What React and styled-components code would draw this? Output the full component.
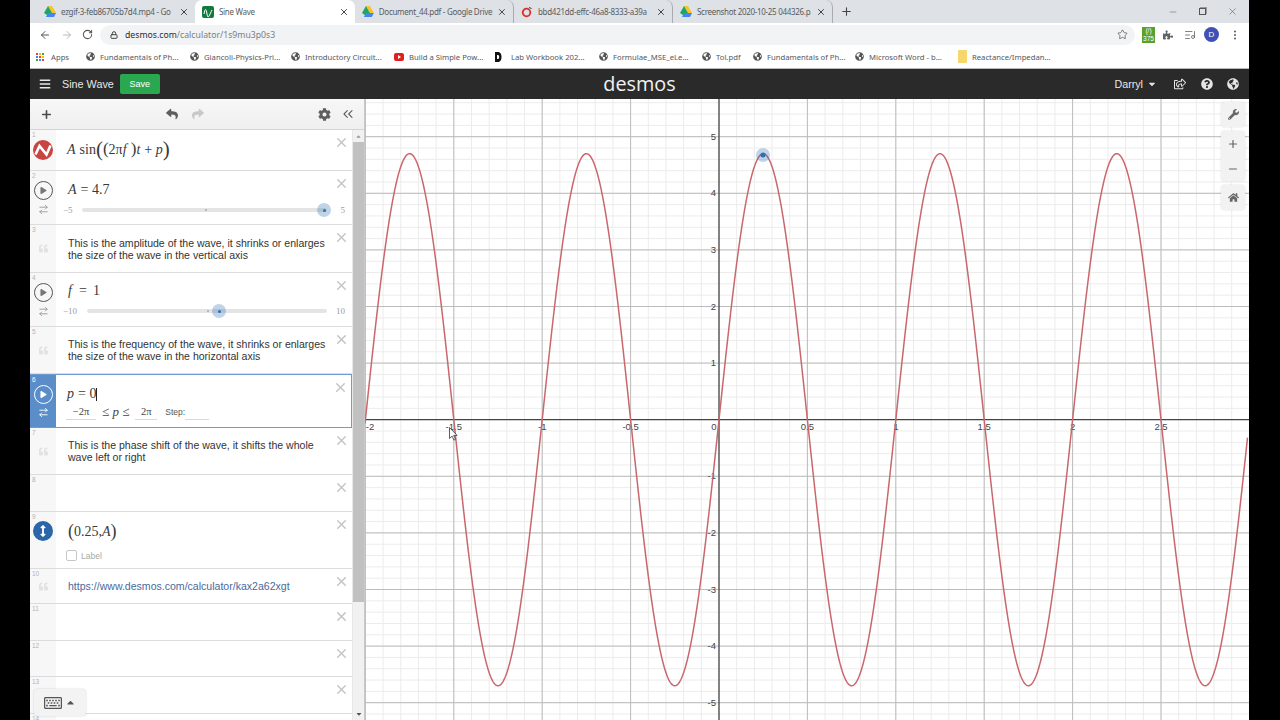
import React from 'react';
import styled, { createGlobalStyle } from 'styled-components';
import { ArrowLeft, ArrowRight, RotateCw, Lock, Star, Plus, Minus, X, ArrowRightLeft, ChevronsLeft, MoreVertical, ListMusic } from 'lucide-react';
import {
  FaBars, FaCog, FaWrench, FaHome, FaRegShareSquare, FaQuestionCircle, FaGlobeAmericas, FaReply, FaShare,
  FaQuoteLeft, FaPlay, FaArrowsAltV, FaPuzzlePiece, FaRegKeyboard, FaCaretUp, FaCaretDown,
} from 'react-icons/fa';

const GlobalStyle = createGlobalStyle`
  html, body { margin: 0; padding: 0; background: #000; }
  * { box-sizing: border-box; }
`;

const sansUi = '"Noto Sans", "Open Sans", sans-serif';
const arial = '"Liberation Sans", Arial, sans-serif';
const serif = '"Liberation Serif", "Times New Roman", serif';

const UNIT_X = 176.8;
const UNIT_Y = 56.6;
const ORIGIN_X = 719;
const ORIGIN_Y = 419.7;
const GRAPH_LEFT = 365;
const GRAPH_RIGHT = 1249;
const GRAPH_TOP = 99;
const GRAPH_BOTTOM = 720;

const Frame = styled.div`
  width: 1280px;
  height: 720px;
  background: #000;
  padding: 0 31px 0 30px;
  overflow: hidden;
`;

const Window = styled.div`
  width: 1219px;
  height: 720px;
  display: flex;
  flex-direction: column;
  background: #fff;
`;

const TabStrip = styled.div`
  height: 23px;
  background: #dee1e6;
  display: flex;
  align-items: stretch;
  padding-left: 7px;
  font-family: ${sansUi};
  font-size: 8px;
  letter-spacing: -0.3px;
  color: #5a5c60;
`;

const Tab = styled.div`
  width: ${(p) => p.$w}px;
  display: flex;
  align-items: center;
  gap: 5px;
  padding: 0 6px 0 7px;
  background: ${(p) => (p.$active ? '#fff' : 'transparent')};
  border-radius: 7px 7px 0 0;
  border-right: ${(p) => (p.$sep ? '1px solid #a9abb0' : 'none')};
  background-clip: padding-box;
`;

const TabTitle = styled.span`
  flex: 1;
  white-space: nowrap;
`;

const NewTab = styled.div`
  margin-left: 7px;
  display: flex;
  align-items: center;
  color: #444;
`;

const WindowControls = styled.div`
  margin-left: auto;
  display: flex;
  align-items: center;
  gap: 21px;
  padding-right: 11px;
  color: #555;
`;

const RestoreGlyph = styled.span`
  width: 7px;
  height: 7px;
  border: 1px solid #555;
  box-shadow: 1px -1px 0 0 #999;
`;

const AddressBar = styled.div`
  height: 23px;
  background: #fff;
  display: flex;
  align-items: center;
  padding-left: 9px;
  color: #5f6368;
`;

const NavButton = styled.div`
  width: 21.5px;
  display: flex;
  align-items: center;
  color: ${(p) => (p.$off ? '#b5b8bc' : '#555')};
`;

const Omnibox = styled.div`
  width: 1035px;
  height: 20px;
  margin-left: -3.5px;
  padding: 0 7px 0 10px;
  border-radius: 10px;
  background: #f1f3f4;
  display: flex;
  align-items: center;
  gap: 7px;
  font-family: ${sansUi};
  font-size: 8.7px;
  color: #7b7e83;
`;

const UrlHost = styled.span`
  color: #2c2d30;
`;

const OmniStar = styled.div`
  margin-left: auto;
  display: flex;
  color: #555;
`;

const ExtBadge = styled.div`
  width: 13px;
  height: 16px;
  margin-left: 7px;
  background: #5aa02c;
  color: #fff;
  font-family: ${arial};
  font-size: 6.5px;
  line-height: 8px;
  text-align: center;
`;

const ToolIcon = styled.div`
  margin-left: ${(p) => p.$ml}px;
  display: flex;
  color: #5f6368;
`;

const Avatar = styled.div`
  width: 15px;
  height: 15px;
  margin-left: 8px;
  border-radius: 50%;
  background: #3f51b5;
  color: #fff;
  font-family: ${arial};
  font-size: 8px;
  display: flex;
  align-items: center;
  justify-content: center;
`;

const Bookmarks = styled.div`
  height: 23px;
  background: #fff;
  border-bottom: 1px solid #b9b9b9;
  display: flex;
  align-items: center;
  padding: 0 0 1px 5px;
  font-family: ${sansUi};
  font-size: 7.7px;
  color: #55575b;
`;

const Bookmark = styled.div`
  width: ${(p) => p.$w}px;
  display: flex;
  align-items: center;
  gap: ${(p) => p.$gap || 5}px;
  white-space: nowrap;
`;

const AppsGrid = styled.div`
  display: grid;
  grid-template-columns: repeat(3, 2px);
  gap: 1px;
  margin-left: 1px;
`;

const AppsDot = styled.span`
  width: 2px;
  height: 2px;
  background: ${(p) => p.$c};
`;

const TopBar = styled.div`
  height: 30px;
  background: #2a2a2a;
  color: #e8e8e8;
  display: grid;
  grid-template-columns: 1fr auto 1fr;
  align-items: center;
  font-family: ${arial};
`;

const TopLeft = styled.div`
  display: flex;
  align-items: center;
  padding-left: 9px;
  font-size: 10.8px;
`;

const TopTitle = styled.span`
  margin-left: 11px;
`;

const SaveButton = styled.div`
  width: 40px;
  height: 20px;
  margin-left: 6px;
  border-radius: 2px;
  background: #2aa84f;
  color: #fff;
  font-size: 9px;
  display: flex;
  align-items: center;
  justify-content: center;
`;

const Logo = styled.div`
  font-family: "Open Sans", sans-serif;
  font-size: 19.8px;
  line-height: 24px;
  color: #f2f2f2;
`;

const TopRight = styled.div`
  display: flex;
  align-items: center;
  justify-content: flex-end;
  padding-right: 10px;
  font-size: 10.7px;
`;

const TopIcon = styled.div`
  display: flex;
  margin-left: ${(p) => p.$ml}px;
  color: #e4e4e4;
`;

const Main = styled.div`
  flex: 1;
  display: flex;
  min-height: 0;
`;

const Side = styled.div`
  width: 335px;
  flex: none;
  display: flex;
  flex-direction: column;
  position: relative;
  border-right: 1px solid #c8c8c8;
  overflow: hidden;
`;

const ListHeader = styled.div`
  height: 31px;
  flex: none;
  background: linear-gradient(#f7f7f7, #efefef);
  border-bottom: 1px solid #d4d4d4;
  display: flex;
  align-items: center;
  color: #555;
  padding-left: 10px;
`;

const HeadIcon = styled.div`
  display: flex;
  margin-left: ${(p) => p.$ml || 0}px;
  color: ${(p) => p.$c || '#5e5e5e'};
`;

const ListBody = styled.div`
  flex: 1;
  display: flex;
  min-height: 0;
`;

const Rows = styled.div`
  width: 322px;
  flex: none;
`;

const RowBox = styled.div`
  height: ${(p) => p.$h}px;
  display: flex;
  border-bottom: 1px solid #dcdcdc;
  ${(p) => p.$active && 'border: 1px solid #6f9bcf; border-left: none;'}
`;

const Gutter = styled.div`
  width: 26px;
  flex: none;
  position: relative;
  background: ${(p) => (p.$active ? '#5b8ec9' : '#f7f7f7')};
  display: flex;
  flex-direction: column;
  align-items: center;
  padding-top: ${(p) => p.$top}px;
  gap: ${(p) => p.$gap || 0}px;
  color: ${(p) => (p.$active ? '#fff' : '#9a9a9a')};
`;

const RowNum = styled.span`
  position: absolute;
  top: 1px;
  left: 2px;
  font-family: ${arial};
  font-size: 6.5px;
  color: ${(p) => (p.$active ? '#fff' : '#b4b4b4')};
`;

const PlayCircle = styled.div`
  width: 19px;
  height: 19px;
  border-radius: 50%;
  border: 1.5px solid ${(p) => (p.$active ? '#fff' : '#555')};
  color: ${(p) => (p.$active ? '#fff' : '#777')};
  display: flex;
  align-items: center;
  justify-content: center;
  padding-left: 1px;
`;

const PointCircle = styled.div`
  width: 20px;
  height: 20px;
  border-radius: 50%;
  background: #2a66a8;
  color: #fff;
  display: flex;
  align-items: center;
  justify-content: center;
`;

const Content = styled.div`
  flex: 1;
  min-width: 0;
  display: flex;
  flex-direction: column;
  padding: ${(p) => p.$top || 0}px 0 0 ${(p) => p.$left ?? 12}px;
  color: #333;
`;

const CloseCol = styled.div`
  width: 22px;
  flex: none;
  padding: 5px 0 0 4px;
  margin-left: -4px;
  color: #c2c2c2;
`;

const MathLine = styled.div`
  font-family: ${serif};
  font-size: ${(p) => p.$size || 14}px;
  line-height: 18px;
  color: #3a3a3a;
  white-space: nowrap;
  display: flex;
  align-items: center;
`;

const Var = styled.i`
  margin-right: ${(p) => p.$mr || 0}px;
`;

const BigParen = styled.span`
  font-size: ${(p) => p.$size || 21}px;
  line-height: 18px;
  font-weight: 400;
  transform: translateY(-1px);
`;

const Caret = styled.span`
  width: 1px;
  height: 13px;
  background: #222;
`;

const SliderRow = styled.div`
  display: flex;
  align-items: center;
  margin: ${(p) => p.$mt}px 0 0 -5px;
  width: 282px;
  height: 14px;
  font-family: ${serif};
  font-size: 9px;
  color: #9c9c9c;
`;

const SliderEnd = styled.span`
  width: ${(p) => p.$w}px;
  flex: none;
  text-align: ${(p) => p.$align || 'left'};
`;

const SliderTrack = styled.div`
  flex: 1;
  height: 4px;
  border-radius: 2px;
  background: #e4e4e4;
  position: relative;
  &::before {
    content: '';
    position: absolute;
    left: 50%;
    top: 1px;
    width: 2px;
    height: 2px;
    background: #b8b8b8;
  }
`;

const Thumb = styled.div`
  position: absolute;
  top: -5px;
  width: 14px;
  height: 14px;
  margin-left: -7px;
  border-radius: 50%;
  background: rgba(45, 112, 179, 0.3);
  display: flex;
  align-items: center;
  justify-content: center;
  &::after {
    content: '';
    width: 3px;
    height: 3px;
    border-radius: 50%;
    background: #2d70b3;
  }
`;

const Note = styled.div`
  font-family: ${arial};
  font-size: 10.55px;
  line-height: 12px;
  color: ${(p) => p.$c || '#333'};
  white-space: pre;
`;

const LimitsRow = styled.div`
  display: flex;
  align-items: center;
  margin: 1px 0 0 -1px;
  font-family: ${serif};
  font-size: 10.5px;
  color: #444;
  height: 16px;
`;

const LimitField = styled.span`
  width: ${(p) => p.$w}px;
  height: 15px;
  line-height: 13px;
  text-align: center;
  border-bottom: 1px solid #d8d8d8;
  margin-left: ${(p) => p.$ml || 0}px;
`;

const LimitText = styled.span`
  font-family: ${serif};
  font-size: 13px;
  margin-left: 6px;
`;

const StepLabel = styled.span`
  font-family: ${arial};
  font-size: 8.5px;
  margin-left: 8px;
  color: #555;
`;

const LabelRow = styled.div`
  display: flex;
  align-items: center;
  gap: 4px;
  margin: 9px 0 0 -2px;
  font-family: ${arial};
  font-size: 8.5px;
  color: #a8a8a8;
`;

const CheckBox = styled.span`
  width: 11px;
  height: 11px;
  border: 1px solid #c6c6c6;
  border-radius: 2px;
`;

const KeyboardToggle = styled.div`
  position: absolute;
  left: 4px;
  bottom: 4px;
  width: 52px;
  height: 27px;
  background: #f3f3f3;
  border-radius: 4px;
  box-shadow: 0 0 2px rgba(0, 0, 0, 0.2);
  display: flex;
  align-items: center;
  justify-content: center;
  gap: 3px;
  color: #555;
`;

const ScrollBar = styled.div`
  flex: 1;
  background: #f1f1f1;
  display: flex;
  flex-direction: column;
  align-items: center;
  border-left: 1px solid #e8e8e8;
  color: #555;
`;

const ScrollArrow = styled.div`
  height: ${(p) => p.$h}px;
  display: flex;
  align-items: center;
  flex: none;
`;

const ScrollThumb = styled.div`
  width: 100%;
  height: 460px;
  flex: none;
  background: #c1c1c1;
`;

const ScrollRest = styled.div`
  flex: 1;
`;

const GraphPane = styled.div`
  flex: 1;
  position: relative;
  background: #fff;
  overflow: hidden;
`;

const GraphSvg = styled.svg`
  display: block;
  width: 884px;
  height: 621px;
`;

const GraphTools = styled.div`
  position: absolute;
  top: 3px;
  right: 4px;
  display: flex;
  flex-direction: column;
  gap: 4px;
`;

const ToolGroup = styled.div`
  width: 24px;
  background: #f2f2f2;
  border-radius: 4px;
  box-shadow: 0 0 2px rgba(0, 0, 0, 0.15);
  display: flex;
  flex-direction: column;
  color: #666;
`;

const ToolCell = styled.div`
  height: 25px;
  display: flex;
  align-items: center;
  justify-content: center;
`;

const AxisLabel = styled.text`
  font-family: ${arial};
  font-size: 9.5px;
  fill: #444;
`;

const DriveIcon = () => (
  <svg width="12" height="11" viewBox="0 0 24 22">
    <path d="M8 0h8l8 14h-8z" fill="#f7c325" />
    <path d="M8 0l8 14-4 8L0 14z" fill="#1fa463" />
    <path d="M8 14h16l-4 8H4z" fill="#4285f4" />
  </svg>
);

const DesmosFavicon = () => (
  <svg width="12" height="12" viewBox="0 0 12 12">
    <rect width="12" height="12" rx="2" fill="#127a3e" />
    <path d="M2 8c1-6 2-6 3 0s2 2 5-4" fill="none" stroke="#fff" strokeWidth="1" />
  </svg>
);

const RedRing = () => (
  <svg width="12" height="12" viewBox="0 0 12 12">
    <circle cx="5.5" cy="6.5" r="3.8" fill="none" stroke="#d9302b" strokeWidth="1.8" />
    <path d="M8 1.5l2.5 1" stroke="#333" strokeWidth="1" />
  </svg>
);

const YouTube = () => (
  <svg width="10" height="8" viewBox="0 0 10 8">
    <rect width="10" height="8" rx="2" fill="#e02020" />
    <path d="M4 2l3 2-3 2z" fill="#fff" />
  </svg>
);

const DocD = () => (
  <svg width="8" height="10" viewBox="0 0 8 10">
    <path d="M1 0h3c2.5 0 3.5 2.5 3.5 5S6.5 10 4 10H1z" fill="#111" />
    <path d="M3 3h1c1 0 1.2 1 1.2 2S5 7 4 7H3z" fill="#fff" />
  </svg>
);

const Folder = () => (
  <svg width="9" height="13" viewBox="0 0 9 13">
    <rect width="9" height="13" rx="1" fill="#f7d66b" />
  </svg>
);

const Globe = () => <FaGlobeAmericas size={9} color="#555" />;

const Close = ({ size = 15 }) => <X size={size} strokeWidth={2.2} />;

const Row = ({ num, h, gutterTop, gutterGap, icons, active, children }) => (
  <RowBox $h={h} $active={active}>
    <Gutter $active={active} $top={gutterTop} $gap={gutterGap}>
      <RowNum $active={active}>{num}</RowNum>
      {icons}
    </Gutter>
    {children || <Content />}
    <CloseCol>
      <Close />
    </CloseCol>
  </RowBox>
);

const Play = ({ active }) => (
  <PlayCircle $active={active}>
    <FaPlay size={7} />
  </PlayCircle>
);

const QuoteIcon = () => <FaQuoteLeft size={9} color="#e2e2e2" />;

const bookmarks = [
  { w: 104, icon: <Globe />, text: 'Fundamentals of Ph...' },
  { w: 101, icon: <Globe />, text: 'Giancoli-Physics-Pri...' },
  { w: 103, icon: <Globe />, text: 'Introductory Circuit...' },
  { w: 100, icon: <YouTube />, text: 'Build a Simple Pow...' },
  { w: 105, icon: <DocD />, text: 'Lab Workbook 202...', gap: 9 },
  { w: 103, icon: <Globe />, text: 'Formulae_MSE_eLe...' },
  { w: 51, icon: <Globe />, text: 'Tol.pdf' },
  { w: 102, icon: <Globe />, text: 'Fundamentals of Ph...' },
  { w: 103, icon: <Globe />, text: 'Microsoft Word - b...' },
  { w: 110, icon: <Folder />, text: 'Reactance/Impedan...' },
];

const appsColors = ['#ea4335', '#fbbc05', '#34a853', '#4285f4', '#ea4335', '#fbbc05', '#34a853', '#4285f4', '#ea4335'];

const px = (x) => ORIGIN_X + x * UNIT_X;
const py = (y) => ORIGIN_Y - y * UNIT_Y;

// the plotted trace stops a touch short of the pane edge
const buildCurve = () => {
  const pts = [];
  for (let sx = GRAPH_LEFT; sx <= GRAPH_RIGHT - 1.5; sx += 0.5) {
    const x = (sx - ORIGIN_X) / UNIT_X;
    pts.push(`${sx},${py(4.7 * Math.sin(2 * Math.PI * x)).toFixed(2)}`);
  }
  return pts.join(' ');
};

const Graph = () => {
  const minorX = [];
  for (let i = -21; i <= 30; i += 1) minorX.push(i / 10);
  const minorY = [];
  for (let i = -30; i <= 30; i += 1) minorY.push(i / 5);
  const majorX = [-2, -1.5, -1, -0.5, 0.5, 1, 1.5, 2, 2.5];
  const majorY = [-5, -4, -3, -2, -1, 1, 2, 3, 4, 5];
  return (
    <GraphSvg viewBox={`${GRAPH_LEFT} ${GRAPH_TOP} ${GRAPH_RIGHT - GRAPH_LEFT} ${GRAPH_BOTTOM - GRAPH_TOP}`}>
      {minorX.map((x) => (
        <line key={`mx${x}`} x1={px(x)} x2={px(x)} y1={GRAPH_TOP} y2={GRAPH_BOTTOM} stroke="#ececec" />
      ))}
      {minorY.map((y) => (
        <line key={`my${y}`} y1={py(y)} y2={py(y)} x1={GRAPH_LEFT} x2={GRAPH_RIGHT} stroke="#ececec" />
      ))}
      {majorX.map((x) => (
        <line key={`Mx${x}`} x1={px(x)} x2={px(x)} y1={GRAPH_TOP} y2={GRAPH_BOTTOM} stroke="#bcbcbc" />
      ))}
      {majorY.map((y) => (
        <line key={`My${y}`} y1={py(y)} y2={py(y)} x1={GRAPH_LEFT} x2={GRAPH_RIGHT} stroke="#bcbcbc" />
      ))}
      <line x1={ORIGIN_X} x2={ORIGIN_X} y1={GRAPH_TOP} y2={GRAPH_BOTTOM} stroke="#444" strokeWidth="1.3" />
      <line y1={ORIGIN_Y} y2={ORIGIN_Y} x1={GRAPH_LEFT} x2={GRAPH_RIGHT} stroke="#444" strokeWidth="1.3" />
      {majorX.map((x) => (
        <AxisLabel key={`lx${x}`} x={x === -2 ? 370 : px(x)} y={430} textAnchor="middle">
          {x}
        </AxisLabel>
      ))}
      <AxisLabel x={714} y={430} textAnchor="middle">0</AxisLabel>
      {majorY.map((y) => (
        <AxisLabel key={`ly${y}`} x={716} y={py(y) + 3} textAnchor="end">
          {y}
        </AxisLabel>
      ))}
      <polyline points={buildCurve()} fill="none" stroke="#c9676d" strokeWidth="1.5" />
      <circle cx={763} cy={155} r={7} fill="rgba(45,112,179,0.3)" />
      <circle cx={763} cy={155} r={2.5} fill="#2d70b3" />
      <path d="M449.5 427.5v11l2.6-2.4 1.8 4 1.6-.8-1.8-3.9h3.4z" fill="#fff" stroke="#333" strokeWidth="0.8" />
    </GraphSvg>
  );
};

const App = () => (
  <>
    <GlobalStyle />
    <Frame>
      <Window>
        <TabStrip>
          <Tab $w={158}>
            <DriveIcon />
            <TabTitle>ezgif-3-feb86705b7d4.mp4 - Go</TabTitle>
            <X size={10} strokeWidth={2.4} color="#444" />
          </Tab>
          <Tab $w={160} $active>
            <DesmosFavicon />
            <TabTitle>Sine Wave</TabTitle>
            <X size={10} strokeWidth={2.4} color="#444" />
          </Tab>
          <Tab $w={159} $sep>
            <DriveIcon />
            <TabTitle>Document_44.pdf - Google Drive</TabTitle>
            <X size={10} strokeWidth={2.4} color="#444" />
          </Tab>
          <Tab $w={159} $sep>
            <RedRing />
            <TabTitle>bbd421dd-effc-46a8-8333-a39a</TabTitle>
            <X size={10} strokeWidth={2.4} color="#444" />
          </Tab>
          <Tab $w={160} $sep>
            <DriveIcon />
            <TabTitle>Screenshot 2020-10-25 044326.p</TabTitle>
            <X size={10} strokeWidth={2.4} color="#444" />
          </Tab>
          <NewTab>
            <Plus size={13} strokeWidth={2} />
          </NewTab>
          <WindowControls>
            <Minus size={10} strokeWidth={1.2} />
            <RestoreGlyph />
            <X size={11} strokeWidth={1.2} />
          </WindowControls>
        </TabStrip>
        <AddressBar>
          <NavButton><ArrowLeft size={12} strokeWidth={2} /></NavButton>
          <NavButton $off><ArrowRight size={12} strokeWidth={2} /></NavButton>
          <NavButton><RotateCw size={11} strokeWidth={2.2} /></NavButton>
          <Omnibox>
            <Lock size={8} strokeWidth={3} color="#444" />
            <span><UrlHost>desmos.com</UrlHost>/calculator/1s9mu3p0s3</span>
            <OmniStar><Star size={11} strokeWidth={1.6} /></OmniStar>
          </Omnibox>
          <ExtBadge>{'(/)'}<br />375</ExtBadge>
          <ToolIcon $ml={8}><FaPuzzlePiece size={10} /></ToolIcon>
          <ToolIcon $ml={11}><ListMusic size={12} strokeWidth={1.6} /></ToolIcon>
          <Avatar>D</Avatar>
          <ToolIcon $ml={10}><MoreVertical size={12} strokeWidth={2.2} /></ToolIcon>
        </AddressBar>
        <Bookmarks>
          <Bookmark $w={51} $gap={7}>
            <AppsGrid>
              {appsColors.map((c, i) => <AppsDot key={i} $c={c} />)}
            </AppsGrid>
            Apps
          </Bookmark>
          {bookmarks.map((b, i) => (
            <Bookmark key={i} $w={b.w} $gap={b.gap}>
              {b.icon}
              {b.text}
            </Bookmark>
          ))}
        </Bookmarks>
        <TopBar>
          <TopLeft>
            <FaBars size={12} />
            <TopTitle>Sine Wave</TopTitle>
            <SaveButton>Save</SaveButton>
          </TopLeft>
          <Logo>desmos</Logo>
          <TopRight>
            Darryl
            <TopIcon $ml={4}><FaCaretDown size={10} /></TopIcon>
            <TopIcon $ml={17}><FaRegShareSquare size={12} /></TopIcon>
            <TopIcon $ml={15}><FaQuestionCircle size={12} /></TopIcon>
            <TopIcon $ml={14}><FaGlobeAmericas size={12} /></TopIcon>
          </TopRight>
        </TopBar>
        <Main>
          <Side>
            <ListHeader>
              <HeadIcon $c="#4a4a4a"><Plus size={13} strokeWidth={3} /></HeadIcon>
              <HeadIcon $ml={113}><FaReply size={12} /></HeadIcon>
              <HeadIcon $ml={14} $c="#c8c8c8"><FaShare size={12} /></HeadIcon>
              <HeadIcon $ml={114}><FaCog size={13} /></HeadIcon>
              <HeadIcon $ml={9}><ChevronsLeft size={16} strokeWidth={1.6} /></HeadIcon>
            </ListHeader>
            <ListBody>
              <Rows>
                <Row
                  num={1}
                  h={41}
                  gutterTop={10}
                  icons={(
                    <svg width="20" height="20" viewBox="0 0 20 20">
                      <circle cx="10" cy="10" r="10" fill="#c74440" />
                      <path d="M2.5 14.5L6.5 6l7 8.5 4-9" fill="none" stroke="#fff" strokeWidth="2.6" />
                    </svg>
                  )}
                >
                  <Content $left={11} $top={11}>
                    <MathLine $size={14}>
                      <Var $mr={4}>A</Var>sin<BigParen>(</BigParen><BigParen $size={17}>(</BigParen>2π<Var>f</Var>
                      <BigParen $size={17}>&nbsp;)</BigParen><Var $mr={4}>t</Var>+&nbsp;<Var>p</Var><BigParen>)</BigParen>
                    </MathLine>
                  </Content>
                </Row>
                <Row
                  num={2}
                  h={54}
                  gutterTop={10}
                  gutterGap={4}
                  icons={<><Play /><ArrowRightLeft size={11} /></>}
                >
                  <Content $left={12} $top={10}>
                    <MathLine $size={14}><Var $mr={4}>A</Var>=&nbsp;4.7</MathLine>
                    <SliderRow $mt={4}>
                      <SliderEnd $w={19}>−5</SliderEnd>
                      <SliderTrack><Thumb style={{ left: '98.8%' }} /></SliderTrack>
                      <SliderEnd $w={18} $align="right">5</SliderEnd>
                    </SliderRow>
                  </Content>
                </Row>
                <Row num={3} h={48} gutterTop={19} icons={<QuoteIcon />}>
                  <Content $top={12}>
                    <Note>{'This is the amplitude of the wave, it shrinks or enlarges\nthe size of the wave in the vertical axis'}</Note>
                  </Content>
                </Row>
                <Row
                  num={4}
                  h={54}
                  gutterTop={10}
                  gutterGap={4}
                  icons={<><Play /><ArrowRightLeft size={11} /></>}
                >
                  <Content $left={12} $top={9}>
                    <MathLine><Var $mr={7}>f</Var>=&nbsp;&thinsp;1</MathLine>
                    <SliderRow $mt={4}>
                      <SliderEnd $w={24}>−10</SliderEnd>
                      <SliderTrack><Thumb style={{ left: '55%' }} /></SliderTrack>
                      <SliderEnd $w={18} $align="right">10</SliderEnd>
                    </SliderRow>
                  </Content>
                </Row>
                <Row num={5} h={47} gutterTop={19} icons={<QuoteIcon />}>
                  <Content $top={11}>
                    <Note>{'This is the frequency of the wave, it shrinks or enlarges\nthe size of the wave in the horizontal axis'}</Note>
                  </Content>
                </Row>
                <Row
                  num={6}
                  h={54}
                  active
                  gutterTop={10}
                  gutterGap={3}
                  icons={<><Play active /><ArrowRightLeft size={11} /></>}
                >
                  <Content $left={11} $top={10}>
                    <MathLine><Var $mr={4}>p</Var>=&nbsp;0<Caret /></MathLine>
                    <LimitsRow>
                      <LimitField $w={30}>−2π</LimitField>
                      <LimitText>≤ <Var>p</Var> ≤</LimitText>
                      <LimitField $w={22} $ml={6}>2π</LimitField>
                      <StepLabel>Step:</StepLabel>
                      <LimitField $w={24} />
                    </LimitsRow>
                  </Content>
                </Row>
                <Row num={7} h={47} gutterTop={19} icons={<QuoteIcon />}>
                  <Content $top={11}>
                    <Note>{'This is the phase shift of the wave, it shifts the whole\nwave left or right'}</Note>
                  </Content>
                </Row>
                <Row num={8} h={37} />
                <Row
                  num={9}
                  h={57}
                  gutterTop={9}
                  icons={<PointCircle><FaArrowsAltV size={12} /></PointCircle>}
                >
                  <Content $left={12} $top={11}>
                    <MathLine $size={14}>
                      <BigParen $size={18}>(</BigParen>0.25,<Var>A</Var><BigParen $size={18}>)</BigParen>
                    </MathLine>
                    <LabelRow><CheckBox />Label</LabelRow>
                  </Content>
                </Row>
                <Row num={10} h={35} gutterTop={13} icons={<QuoteIcon />}>
                  <Content $top={11}>
                    <Note $c="#4a6a9c">https://www.desmos.com/calculator/kax2a62xgt</Note>
                  </Content>
                </Row>
                <Row num={11} h={37} />
                <Row num={12} h={36} />
                <Row num={13} h={37} />
                <Row num={14} h={37} />
              </Rows>
              <ScrollBar>
                <ScrollArrow $h={12}><FaCaretUp size={7} color="#999" /></ScrollArrow>
                <ScrollThumb />
                <ScrollRest />
                <ScrollArrow $h={12}><FaCaretDown size={8} /></ScrollArrow>
              </ScrollBar>
            </ListBody>
            <KeyboardToggle>
              <FaRegKeyboard size={18} />
              <FaCaretUp size={11} />
            </KeyboardToggle>
          </Side>
          <GraphPane>
            <Graph />
            <GraphTools>
              <ToolGroup><ToolCell><FaWrench size={11} /></ToolCell></ToolGroup>
              <ToolGroup>
                <ToolCell><Plus size={12} strokeWidth={2.4} /></ToolCell>
                <ToolCell><Minus size={12} strokeWidth={2.4} /></ToolCell>
              </ToolGroup>
              <ToolGroup><ToolCell><FaHome size={11} /></ToolCell></ToolGroup>
            </GraphTools>
          </GraphPane>
        </Main>
      </Window>
    </Frame>
  </>
);

export default App;
